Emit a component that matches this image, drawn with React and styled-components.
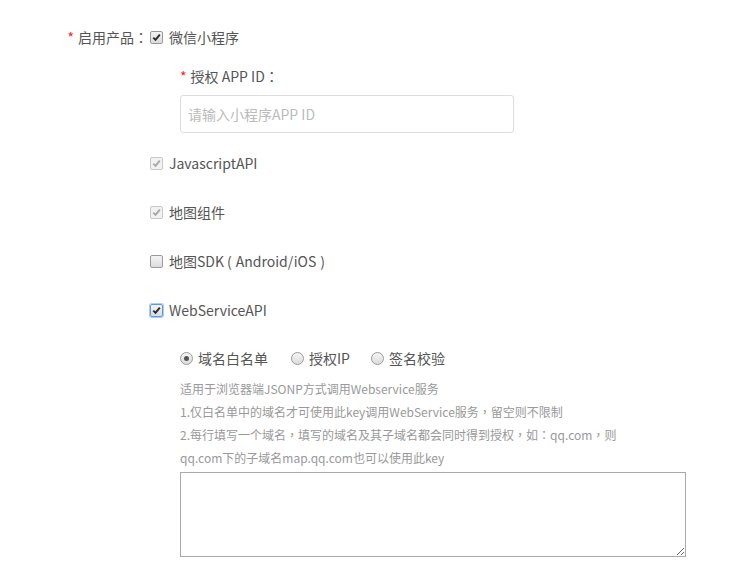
import styled, { createGlobalStyle } from 'styled-components';

const GlobalStyle = createGlobalStyle`
    html, body {
        margin: 0;
        padding: 0;
        background: #fff;
    }
    body {
        font-family: "Noto Sans CJK SC", "Noto Sans", sans-serif;
        color: #555;
    }
`;

const Page = styled.div`
    padding: 27px 0 0 0;
    width: 751px;
    height: 568px;
    box-sizing: border-box;
    overflow: hidden;
`;

const Row = styled.div`
    display: flex;
    align-items: center;
    height: 20px;
    font-size: 14px;
    line-height: 20px;
    margin-top: ${(p) => p.$top || 0}px;
`;

const Label = styled.div`
    width: 150px;
    padding-right: 2px;
    box-sizing: border-box;
    text-align: right;
    white-space: nowrap;
`;

const Star = styled.span`
    color: #f22;
    margin-right: 4px;
`;

// centred full-width punctuation, like the YaHei rendering
const Punct = styled.span`
    font-family: "Noto Sans CJK TC", sans-serif;
`;

const Paren = styled.span`
    padding: 0 ${(p) => (p.$open ? '4px 0 3px' : '3px 0 4px')};
`;

const Block = styled.div`
    padding-left: ${(p) => p.$indent}px;
`;

const Box = styled.span`
    display: inline-flex;
    align-items: center;
    justify-content: center;
    box-sizing: border-box;
    width: 13px;
    height: 13px;
    margin-right: ${(p) => (p.$round ? 5 : 6)}px;
    border-radius: ${(p) => (p.$round ? '50%' : '2px')};
    border: 1px solid ${(p) => (p.$disabled ? '#c8c8c8' : p.$focus ? '#5b9be0' : '#9a9a9a')};
    background: ${(p) => (p.$disabled ? '#f2f2f2' : 'linear-gradient(#f4f4f4, #dcdcdc)')};
    box-shadow: ${(p) => (p.$focus ? '0 0 0 1px #a9cdf3' : 'none')};
    flex-shrink: 0;
`;

const Dot = styled.span`
    width: 5px;
    height: 5px;
    border-radius: 50%;
    background: #555;
`;

const Text = styled.span`
    white-space: nowrap;
`;

const RadioText = styled.span`
    white-space: nowrap;
    margin-right: ${(p) => p.$gap || 0}px;
`;

const Input = styled.input`
    display: block;
    box-sizing: border-box;
    width: 334px;
    height: 38px;
    margin-top: 9px;
    padding: 0 7px;
    border: 1px solid #ddd;
    border-radius: 3px;
    font-family: inherit;
    font-size: 14px;
    color: #555;
    outline: none;
    &::placeholder {
        color: #bbb;
    }
`;

const Help = styled.div`
    margin-top: 9px;
    font-size: 12px;
    line-height: 23px;
    color: #999;
    white-space: nowrap;
`;

const Area = styled.textarea`
    display: block;
    box-sizing: border-box;
    width: 506px;
    height: 85px;
    margin-top: 3px;
    border: 1px solid #a9a9a9;
    border-radius: 0;
    font-family: inherit;
    outline: none;
`;

function Check({ checked, disabled, focus }) {
    return (
        <Box $disabled={disabled} $focus={focus}>
            {checked && (
                <svg width="9" height="9" viewBox="0 0 9 9">
                    <path d="M1.3 4.6 L3.5 6.8 L7.8 1.6" fill="none" stroke={disabled ? '#a8a8a8' : '#2a2a2a'} strokeWidth="1.9" />
                </svg>
            )}
        </Box>
    );
}

function Radio({ checked }) {
    return <Box $round>{checked && <Dot />}</Box>;
}

const options = [
    { key: 'js', name: 'JavascriptAPI', checked: true, disabled: true },
    { key: 'comp', name: '地图组件', checked: true, disabled: true },
    { key: 'sdk', name: <>地图SDK<Paren $open>(</Paren>Android/iOS<Paren>)</Paren></>, checked: false },
];

export default function App() {
    return (
        <>
            <GlobalStyle />
            <Page>
                <Row>
                    <Label><Star>*</Star>启用产品<Punct>：</Punct></Label>
                    <Check checked />
                    <Text>微信小程序</Text>
                </Row>
                <Block $indent={150}>
                    <Block $indent={30}>
                        <Row $top={19}><Text><Star>*</Star>授权 APP ID<Punct>：</Punct></Text></Row>
                        <Input placeholder="请输入小程序APP ID" />
                    </Block>
                    {options.map((o, i) => (
                        <Row key={o.key} $top={i === 0 ? 20 : 29}>
                            <Check checked={o.checked} disabled={o.disabled} />
                            <Text>{o.name}</Text>
                        </Row>
                    ))}
                    <Row $top={29}>
                        <Check checked focus />
                        <Text>WebServiceAPI</Text>
                    </Row>
                    <Block $indent={30}>
                        <Row $top={28}>
                            <Radio checked />
                            <RadioText $gap={23}>域名白名单</RadioText>
                            <Radio />
                            <RadioText $gap={21}>授权IP</RadioText>
                            <Radio />
                            <RadioText>签名校验</RadioText>
                        </Row>
                        <Help>
                            适用于浏览器端JSONP方式调用Webservice服务<br />
                            1.仅白名单中的域名才可使用此key调用WebService服务<Punct>，</Punct>留空则不限制<br />
                            2.每行填写一个域名<Punct>，</Punct>填写的域名及其子域名都会同时得到授权<Punct>，</Punct>如<Punct>：</Punct>qq.com<Punct>，</Punct>则<br />
                            qq.com下的子域名map.qq.com也可以使用此key
                        </Help>
                        <Area />
                    </Block>
                </Block>
            </Page>
        </>
    );
}
